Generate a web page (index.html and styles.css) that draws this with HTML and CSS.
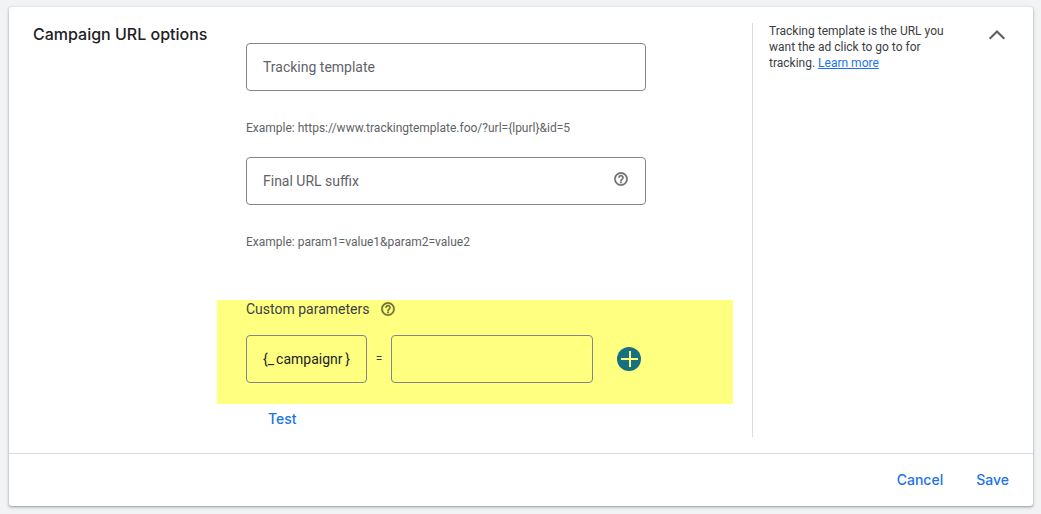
FILE: index.html
```html
<!DOCTYPE html>
<html lang="en">
<head>
<meta charset="utf-8">
<meta name="viewport" content="width=device-width, initial-scale=1">
<title>Campaign URL options</title>
<link rel="stylesheet" href="styles.css">
</head>
<body class="page">
<svg class="sprite" aria-hidden="true">
  <symbol id="help" viewBox="0 0 24 24"><path d="M11 18h2v-2h-2v2zm1-16C6.480 2 2 6.480 2 12s4.480 10 10 10 10-4.480 10-10S17.520 2 12 2zm0 18c-4.410 0-8-3.590-8-8s3.590-8 8-8 8 3.590 8 8-3.590 8-8 8zm0-14c-2.210 0-4 1.790-4 4h2c0-1.100.9-2 2-2s2 .9 2 2c0 2-3 1.750-3 5h2c0-2.250 3-2.500 3-5 0-2.210-1.790-4-4-4z"/></symbol>
</svg>
<form class="card">
  <div class="card-body">
    <h2 class="title">Campaign URL options</h2>
    <div class="main">
      <div class="group">
        <label class="field"><input class="input" type="text" placeholder="Tracking template" aria-label="Tracking template"></label>
        <p class="hint">Example: https://www.trackingtemplate.foo/?url={lpurl}&amp;id=5</p>
      </div>
      <div class="group">
        <div class="field">
          <input class="input" type="text" placeholder="Final URL suffix" aria-label="Final URL suffix">
          <button class="icon-button field-help" type="button" aria-label="Help for final URL suffix"><svg class="help-icon"><use href="#help"/></svg></button>
        </div>
        <p class="hint">Example: param1=value1&amp;param2=value2</p>
      </div>
      <section class="custom">
        <div class="custom-head">
          <span>Custom parameters</span>
          <button class="icon-button" type="button" aria-label="Help for custom parameters"><svg class="help-icon"><use href="#help"/></svg></button>
        </div>
        <div class="param-row">
          <label class="field param-name"><span>{_</span><input class="input name-input" type="text" value="campaignr" aria-label="Parameter name"><span>}</span></label>
          <span class="equals">=</span>
          <label class="field param-value"><input class="input" type="text" aria-label="Parameter value"></label>
          <button class="icon-button add" type="button" aria-label="Add parameter">
            <svg class="add-icon" viewBox="0 0 24 24"><circle cx="12" cy="12" r="12" fill="#176f80"/><path d="M4 12h17M13 4v16" fill="none" stroke="#ffff80" stroke-width="2"/></svg>
          </button>
        </div>
      </section>
      <button class="text-button test" type="button">Test</button>
    </div>
    <aside class="aside">
      <p class="help-text">Tracking template is the URL you want the ad click to go to for tracking. <a class="link" href="#">Learn more</a></p>
      <button class="icon-button collapse" type="button" aria-label="Collapse">
        <svg class="chevron" viewBox="0 0 24 24"><path d="M4.700 15.800l7.300-7.300 7.300 7.300" fill="none" stroke="#5f6368" stroke-width="2.200"/></svg>
      </button>
    </aside>
  </div>
  <div class="footer">
    <button class="text-button" type="button">Cancel</button>
    <button class="text-button" type="submit">Save</button>
  </div>
</form>
</body>
</html>
```
FILE: styles.css
```css
* { box-sizing: border-box; }

.page {
  margin: 0;
  padding: 7px 8px 8px 9px;
  background: #f1f3f4;
  color: #3c4043;
  font-family: Roboto, sans-serif;
  font-size: 14px;
}

.sprite { display: none; }

.card {
  background: #fff;
  border-radius: 3px;
  box-shadow: 0 1px 2px rgba(60, 64, 67, .35), 0 1px 3px 1px rgba(60, 64, 67, .15);
}

.card-body {
  display: flex;
  padding: 16px 0 16px 24px;
}

.title {
  flex: none;
  width: 184px;
  margin: 0;
  color: #202124;
  font: 500 16px/22px Inter, sans-serif;
}

.main {
  flex: 1;
  min-width: 0;
  margin-right: 19px;
  padding-top: 20px;
}

.group {
  max-width: 429px;
  margin-bottom: 21px;
  padding-left: 29px;
}

.field {
  display: flex;
  align-items: center;
  min-width: 0;
  height: 48px;
  padding: 0 16px;
  border: 1px solid #80868b;
  border-radius: 4px;
}

.input {
  flex: 1;
  min-width: 0;
  padding: 0;
  border: 0;
  outline: 0;
  background: transparent;
  color: #202124;
  font: inherit;
}

.input::placeholder { color: #5f6368; opacity: 1; }

.hint {
  margin: 29px 0 0;
  color: #5f6368;
  font-size: 12px;
  line-height: 16px;
}

.icon-button {
  display: flex;
  flex: none;
  padding: 0;
  border: 0;
  background: none;
  color: #6b6b6b;
  cursor: pointer;
}

.field-help { padding-bottom: 4px; }

.help-icon {
  width: 16px;
  height: 16px;
  fill: currentColor;
  stroke: currentColor;
  stroke-width: 0.6;
}

.custom {
  margin-top: 50px;
  padding: 0 29px 21px;
  background: #ffff80;
}

.custom-head {
  display: flex;
  align-items: center;
  gap: 11px;
  line-height: 18px;
}

.custom .icon-button { color: #6b6b36; }

.param-row {
  display: flex;
  align-items: center;
  margin-top: 17px;
}

.param-name { width: 121px; color: #202124; }

.name-input { margin: 0 2px; }

.equals {
  width: 24px;
  font-size: 12px;
  text-align: center;
}

.param-value { flex: 0 1 202px; }

.add { margin-left: 24px; }

.add-icon { width: 24px; height: 24px; }

.text-button {
  padding: 0;
  border: 0;
  background: none;
  color: #1a73e8;
  font: 500 14px/16px Inter, sans-serif;
  cursor: pointer;
}

.test {
  display: block;
  margin: 7px 0 10px 51px;
}

.aside {
  display: flex;
  flex: 0 0 281px;
  justify-content: space-between;
  align-items: flex-start;
  padding: 0 24px 0 16px;
  border-left: 1px solid #dadce0;
}

.help-text {
  width: 192px;
  margin: 0;
  font-size: 12px;
  line-height: 16px;
}

.link { color: #1a73e8; }

.chevron { width: 24px; height: 24px; }

.footer {
  display: flex;
  justify-content: flex-end;
  gap: 33px;
  padding: 18px 24px;
  border-top: 1px solid #dadce0;
}
```
